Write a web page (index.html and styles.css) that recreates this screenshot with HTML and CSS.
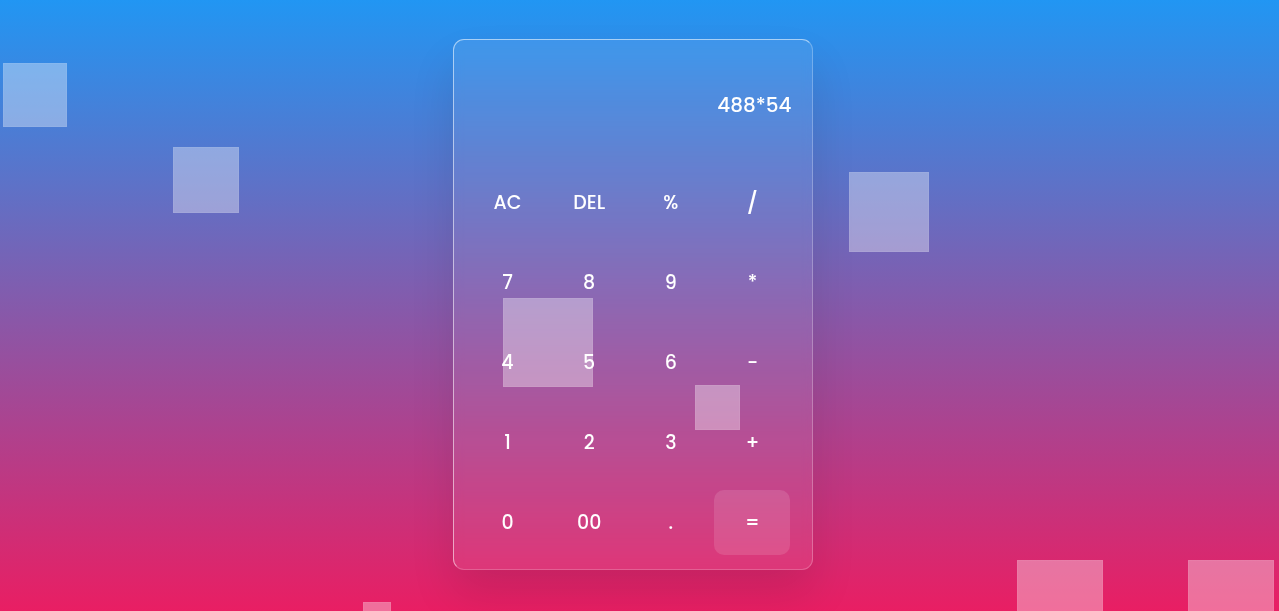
FILE: index.html
```html
<!DOCTYPE html>
<html lang="en">
<head>
<meta charset="utf-8">
<title>Glass Calculator</title>
<link rel="stylesheet" href="styles.css">
</head>
<body>
<div class="scene">
  <div class="calculator">
    <div class="display">488*54</div>
    <div class="keys">
      <span class="key">AC</span>
      <span class="key">DEL</span>
      <span class="key">%</span>
      <span class="key key-slash">/</span>
      <span class="key">7</span>
      <span class="key">8</span>
      <span class="key">9</span>
      <span class="key">*</span>
      <span class="key">4</span>
      <span class="key">5</span>
      <span class="key">6</span>
      <span class="key">-</span>
      <span class="key">1</span>
      <span class="key">2</span>
      <span class="key">3</span>
      <span class="key">+</span>
      <span class="key">0</span>
      <span class="key">00</span>
      <span class="key">.</span>
      <span class="key key-equal">=</span>
    </div>
  </div>
  <ul class="squares">
    <li class="sq sq1"></li>
    <li class="sq sq2"></li>
    <li class="sq sq3"></li>
    <li class="sq sq4"></li>
    <li class="sq sq5"></li>
    <li class="sq sq6"></li>
    <li class="sq sq7"></li>
    <li class="sq sq8"></li>
  </ul>
</div>
</body>
</html>
```

FILE: styles.css
```css
* { box-sizing: border-box; }
html, body {
  margin: 0;
  padding: 0;
  overflow: hidden;
}
body {
  width: 1279px;
  height: 611px;
  background: linear-gradient(#2196f3, #e91e63);
  font-family: "Poppins", "Inter", "Noto Sans", sans-serif;
}
.scene {
  position: relative;
  width: 1279px;
  height: 611px;
  overflow: hidden;
  display: flex;
  justify-content: center;
  align-items: flex-start;
  padding: 39px 14px 0 0;
}
.calculator {
  width: 360px;
  height: 531px;
  border-radius: 11px;
  background: rgba(255, 255, 255, 0.08);
  backdrop-filter: blur(5px);
  border-top: 1px solid rgba(255, 255, 255, 0.55);
  border-left: 1px solid rgba(255, 255, 255, 0.55);
  border-right: 1px solid rgba(255, 255, 255, 0.25);
  border-bottom: 1px solid rgba(255, 255, 255, 0.2);
  box-shadow: 0 25px 45px rgba(0, 0, 0, 0.1);
  padding: 0 20px 14px 16px;
  display: flex;
  flex-direction: column;
}
.display {
  height: 132px;
  display: flex;
  align-items: center;
  justify-content: flex-end;
  color: #fff;
  font-size: 20px;
  font-weight: 500;
  padding-bottom: 1px;
}
.keys {
  display: grid;
  grid-template-columns: repeat(4, 76px);
  grid-auto-rows: 65px;
  column-gap: 5.67px;
  row-gap: 15px;
}
.key {
  display: flex;
  align-items: center;
  justify-content: center;
  color: #fff;
  font-size: 19px;
  font-weight: 500;
  border-radius: 10px;
}
.key-slash {
  font-size: 22px;
}
.key-equal {
  background: rgba(255, 255, 255, 0.12);
}
.squares {
  list-style: none;
  margin: 0;
  padding: 0;
}
.sq {
  position: absolute;
  background: rgba(255, 255, 255, 0.36);
  border: 1px solid rgba(255, 255, 255, 0.06);
}
.sq1 { left: 3px; top: 63px; width: 64px; height: 64px; }
.sq2 { left: 173px; top: 147px; width: 66px; height: 66px; }
.sq3 { left: 849px; top: 172px; width: 80px; height: 80px; }
.sq4 { left: 503px; top: 298px; width: 90px; height: 89px; }
.sq5 { left: 695px; top: 385px; width: 45px; height: 45px; }
.sq6 { left: 1017px; top: 560px; width: 86px; height: 86px; }
.sq7 { left: 1188px; top: 560px; width: 86px; height: 86px; }
.sq8 { left: 363px; top: 602px; width: 28px; height: 28px; }
```
